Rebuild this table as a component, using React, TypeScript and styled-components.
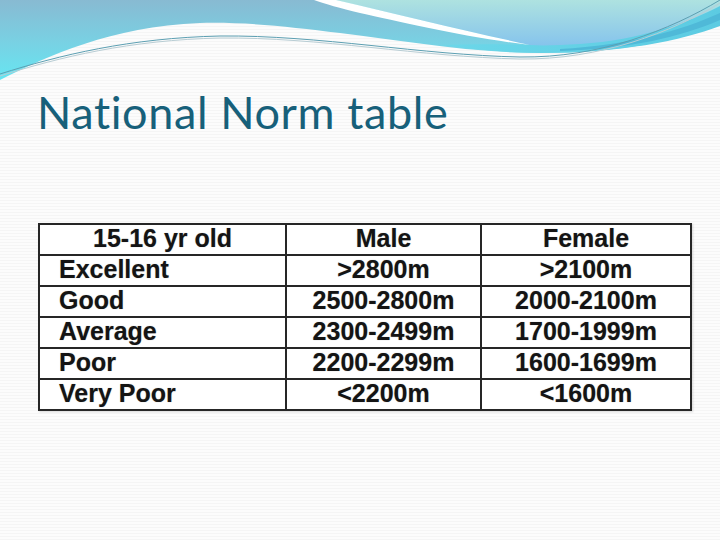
import React from "react";
import styled, { createGlobalStyle } from "styled-components";

const GlobalStyle = createGlobalStyle`
  html, body { margin: 0; padding: 0; }
  body { background: #fbfbfb; }
`;

const Slide = styled.div`
  width: 720px;
  height: 540px;
  overflow: hidden;
  display: flex;
  flex-direction: column;
  background: repeating-linear-gradient(to bottom, #fcfcfc 0px, #fcfcfc 2px, #f5f5f5 2px, #f5f5f5 3px);
`;

const Wave = styled.svg`
  display: block;
  width: 720px;
  height: 84px;
  flex: none;
`;

const Title = styled.h1`
  margin: 2px 0 0 37px;
  font-family: Lato, "Open Sans", sans-serif;
  font-weight: 400;
  font-size: 45px;
  line-height: 52px;
  letter-spacing: 0.6px;
  font-variant-ligatures: none;
  font-feature-settings: "liga" 0;
  color: #17607a;
`;

const NormTable = styled.table`
  margin: 85px 0 0 38px;
  width: 652px;
  border-collapse: collapse;
  font-family: "Liberation Sans", Arial, sans-serif;
  font-weight: 700;
  font-size: 25px;
  color: #141414;
  background: #ffffff;
  table-layout: fixed;
  box-shadow: 1px 1px 2px rgba(0, 0, 0, 0.15);
`;

const Cell = styled.td<{ $align?: "left" | "center" }>`
  border: 2px solid #262626;
  height: 27px;
  padding: 0 0 2px ${(p) => (p.$align === "left" ? "19px" : "0")};
  line-height: 27px;
  text-align: ${(p) => p.$align ?? "center"};
  vertical-align: middle;
  white-space: nowrap;
  text-shadow: 0 0 1px rgba(0, 0, 0, 0.35);
`;

const rows: [string, string, string][] = [
  ["Excellent", ">2800m", ">2100m"],
  ["Good", "2500-2800m", "2000-2100m"],
  ["Average", "2300-2499m", "1700-1999m"],
  ["Poor", "2200-2299m", "1600-1699m"],
  ["Very Poor", "<2200m", "<1600m"],
];

export default function App() {
  return (
    <>
      <GlobalStyle />
      <Slide>
        <Wave viewBox="0 0 720 84" preserveAspectRatio="none">
          <defs>
            <linearGradient id="gA" x1="0" y1="0" x2="0" y2="1">
              <stop offset="0" stopColor="#88bad2" />
              <stop offset="0.55" stopColor="#78d2e4" />
              <stop offset="1" stopColor="#66e6f2" />
            </linearGradient>
            <linearGradient id="gB" x1="0" y1="0" x2="0" y2="1">
              <stop offset="0" stopColor="#aee2e0" />
              <stop offset="1" stopColor="#86c4ec" />
            </linearGradient>
            <linearGradient id="gC" x1="0" y1="0" x2="1" y2="0">
              <stop offset="0" stopColor="#72dcec" />
              <stop offset="1" stopColor="#5ccbe2" />
            </linearGradient>
          </defs>
          <path
            d="M0,0 L720,0 L720,25 C680,40 620,53 540,53 C470,53 400,40 340,33 C290,27 250,22 200,23 C110,27 50,55 0,80 Z"
            fill="url(#gA)"
          />
          <path
            d="M330,0 L720,0 L720,26 C680,41 620,53 540,53 C500,52 470,49 440,45 C470,44 500,44 530,45 C470,32 400,15 330,0 Z"
            fill="url(#gC)"
          />
          <path
            d="M335,0 L720,0 L720,6 C690,22 640,40 580,44 C560,45 545,46 530,45 C470,32 400,15 335,0 Z"
            fill="url(#gB)"
          />
          <path
            d="M314,0 L336,0 C400,15 470,32 530,45 C470,38 400,22 360,13 C340,8 325,4 314,0 Z"
            fill="#ffffff"
          />
          <path
            d="M560,49 C630,45 680,31 720,13 L720,20 C680,37 630,49 560,51 Z"
            fill="#4fb9d8"
          />
          <path
            d="M0,74 C60,55 130,38 220,36 C320,35 420,55 520,57 C600,58 670,30 720,0"
            fill="none"
            stroke="#5c9fb2"
            strokeWidth="1"
          />
          <path
            d="M0,76 C60,57 130,40 220,38 C320,37 420,57 520,59 C600,60 672,32 720,3"
            fill="none"
            stroke="#b8cdd4"
            strokeWidth="1"
          />
        </Wave>
        <Title>National Norm table</Title>
        <NormTable>
          <colgroup>
            <col style={{ width: 247 }} />
            <col style={{ width: 195 }} />
            <col style={{ width: 210 }} />
          </colgroup>
          <tbody>
            <tr>
              <Cell>15-16 yr old</Cell>
              <Cell>Male</Cell>
              <Cell>Female</Cell>
            </tr>
            {rows.map(([label, male, female]) => (
              <tr key={label}>
                <Cell $align="left">{label}</Cell>
                <Cell>{male}</Cell>
                <Cell>{female}</Cell>
              </tr>
            ))}
          </tbody>
        </NormTable>
      </Slide>
    </>
  );
}
